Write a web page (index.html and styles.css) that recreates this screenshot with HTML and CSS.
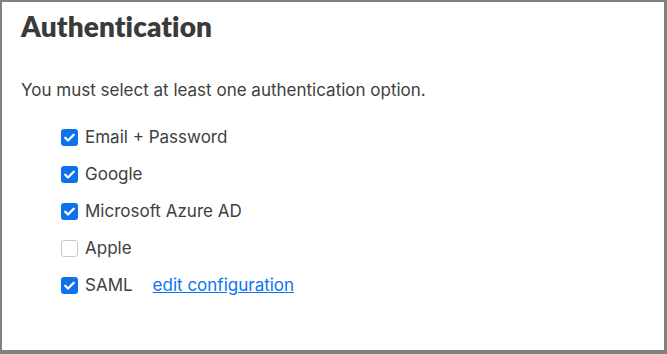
FILE: index.html
```html
<!DOCTYPE html>
<html>
<head>
<meta charset="utf-8">
<link rel="stylesheet" href="styles.css">
</head>
<body>
<div class="panel">
  <h1 class="title">Authentication</h1>
  <p class="note">You must select at least one authentication option.</p>
  <ul class="options">
    <li class="option"><span class="box checked"><svg viewBox="0 0 16 16" width="17" height="17"><path d="M4 8.2l2.6 2.6L12 5.4" fill="none" stroke="#fff" stroke-width="2.2" stroke-linecap="round" stroke-linejoin="round"/></svg></span><span class="label">Email + Password</span></li>
    <li class="option"><span class="box checked"><svg viewBox="0 0 16 16" width="17" height="17"><path d="M4 8.2l2.6 2.6L12 5.4" fill="none" stroke="#fff" stroke-width="2.2" stroke-linecap="round" stroke-linejoin="round"/></svg></span><span class="label">Google</span></li>
    <li class="option"><span class="box checked"><svg viewBox="0 0 16 16" width="17" height="17"><path d="M4 8.2l2.6 2.6L12 5.4" fill="none" stroke="#fff" stroke-width="2.2" stroke-linecap="round" stroke-linejoin="round"/></svg></span><span class="label">Microsoft Azure AD</span></li>
    <li class="option"><span class="box"></span><span class="label">Apple</span></li>
    <li class="option"><span class="box checked"><svg viewBox="0 0 16 16" width="17" height="17"><path d="M4 8.2l2.6 2.6L12 5.4" fill="none" stroke="#fff" stroke-width="2.2" stroke-linecap="round" stroke-linejoin="round"/></svg></span><span class="label">SAML</span><a class="link" href="#">edit configuration</a></li>
  </ul>
</div>
</body>
</html>
```
FILE: styles.css
```css
html, body {
  margin: 0;
  padding: 0;
  background: #fff;
}
body {
  width: 667px;
  height: 354px;
  box-sizing: border-box;
  font-family: Inter, "Noto Sans", sans-serif;
  color: #404040;
}
.panel {
  box-sizing: border-box;
  width: 667px;
  height: 354px;
  border-style: solid;
  border-color: #808080;
  border-width: 2px 3px 4px 2px;
  padding: 8px 0 0 19px;
}
.title {
  margin: 0;
  font-family: Lato, Inter, sans-serif;
  font-weight: 800;
  font-size: 28px;
  line-height: 32px;
  color: #3a3a3a;
  letter-spacing: 0.1px;
}
.note {
  margin: 36px 0 0 0;
  font-size: 17px;
  line-height: 24px;
}
.options {
  list-style: none;
  margin: 23px 0 0 0;
  padding: 0 0 0 40px;
  display: flex;
  flex-direction: column;
  gap: 13px;
}
.option {
  display: flex;
  align-items: center;
  height: 24px;
  font-size: 17px;
}
.box {
  width: 17px;
  height: 17px;
  box-sizing: border-box;
  border: 1px solid #c9c9c9;
  border-radius: 3px;
  background: #fff;
  display: flex;
  margin-right: 7px;
}
.box.checked {
  border: none;
  background: #0e72ed;
}
.label {
  line-height: 24px;
}
.link {
  margin-left: 20px;
  color: #0e72ed;
  text-decoration: underline;
}
```
